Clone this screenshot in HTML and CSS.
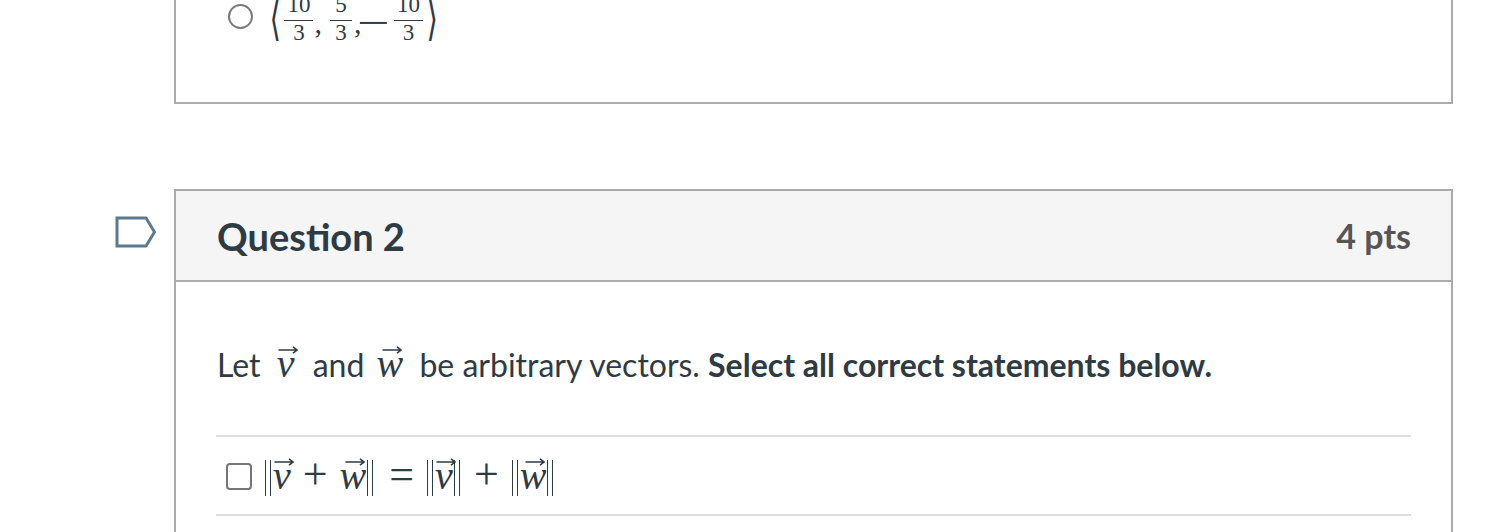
FILE: index.html
```html
<!DOCTYPE html>
<html lang="en">
<head>
<meta charset="utf-8">
<title>Quiz</title>
<link rel="stylesheet" href="styles.css">
</head>
<body>
<div class="page">
  <div class="row">
    <div class="gutter"></div>
    <div class="card card-prev">
      <div class="prev-body">
        <div class="choice">
          <span class="radio"></span>
          <span class="math">
            <span class="delim">⟨</span>
            <span class="frac"><span class="num">10</span><span class="den">3</span></span>
            <span class="comma">,</span>
            <span class="frac"><span class="num">5</span><span class="den">3</span></span>
            <span class="comma comma-tight">,</span>
            <span class="minus">−</span>
            <span class="frac"><span class="num">10</span><span class="den">3</span></span>
            <span class="delim">⟩</span>
          </span>
        </div>
      </div>
    </div>
  </div>

  <div class="row row-q">
    <div class="gutter gutter-flag">
      <svg class="flag" width="42" height="32" viewBox="0 0 42 32">
        <path d="M2 2 H31 L39.5 16 L31 30 H2 Z" fill="none" stroke="#5b7a91" stroke-width="3" stroke-linejoin="miter"/>
      </svg>
    </div>
    <div class="card">
      <div class="card-head">
        <h2 class="q-title">Question 2</h2>
        <span class="pts">4 pts</span>
      </div>
      <div class="card-body">
        <p class="q-text">Let <span class="vec vec-text vec-v"><svg class="arrow" viewBox="0 0 20 8"><path d="M0.5 4 H18.5 M15 0.8 L19 4 L15 7.2" fill="none" stroke="#2d3b45" stroke-width="1.5"/></svg>v</span> and <span class="vec vec-text vec-w"><svg class="arrow" viewBox="0 0 20 8"><path d="M0.5 4 H18.5 M15 0.8 L19 4 L15 7.2" fill="none" stroke="#2d3b45" stroke-width="1.5"/></svg>w</span> be arbitrary vectors. <strong>Select all correct statements below.</strong></p>
        <div class="answers">
          <div class="answer">
            <span class="checkbox"></span>
            <span class="eq"><span class="norm"></span><span class="vec vec-v"><svg class="arrow" viewBox="0 0 20 8"><path d="M0.5 4 H18.5 M15 0.8 L19 4 L15 7.2" fill="none" stroke="#2d3b45" stroke-width="1.5"/></svg>v</span><span class="op">+</span><span class="vec vec-w"><svg class="arrow" viewBox="0 0 20 8"><path d="M0.5 4 H18.5 M15 0.8 L19 4 L15 7.2" fill="none" stroke="#2d3b45" stroke-width="1.5"/></svg>w</span><span class="norm"></span><span class="op rel">=</span><span class="norm"></span><span class="vec vec-v"><svg class="arrow" viewBox="0 0 20 8"><path d="M0.5 4 H18.5 M15 0.8 L19 4 L15 7.2" fill="none" stroke="#2d3b45" stroke-width="1.5"/></svg>v</span><span class="norm"></span><span class="op">+</span><span class="norm"></span><span class="vec vec-w"><svg class="arrow" viewBox="0 0 20 8"><path d="M0.5 4 H18.5 M15 0.8 L19 4 L15 7.2" fill="none" stroke="#2d3b45" stroke-width="1.5"/></svg>w</span><span class="norm"></span></span>
          </div>
        </div>
      </div>
    </div>
  </div>
</div>
</body>
</html>
```

FILE: styles.css
```css
* { box-sizing: border-box; }

html, body {
  margin: 0;
  padding: 0;
  background: #ffffff;
}

body {
  font-family: Lato, "Open Sans", "Liberation Sans", sans-serif;
  color: #2d3b45;
  overflow: hidden;
}

.page {
  width: 1500px;
  padding-right: 47px;
}

.row {
  display: flex;
  align-items: flex-start;
}

.row-q {
  margin-top: 85px;
}

.gutter {
  width: 174px;
  flex: 0 0 174px;
}

.gutter-flag {
  padding-top: 27px;
  padding-left: 115px;
}

.flag { display: block; }

.card {
  flex: 1 1 auto;
  border: 2px solid #aaaaaa;
  background: #ffffff;
}

.card-prev {
  border-top: none;
}

/* previous question: only the last choice is visible */
.prev-body {
  height: 102px;
  padding-left: 52px;
  overflow: hidden;
}

.choice {
  display: flex;
  align-items: center;
  margin-top: -7px;
}

.radio {
  width: 25px;
  height: 25px;
  border: 2px solid #7a7a7a;
  border-radius: 50%;
  margin-top: -4px;
  flex: 0 0 auto;
}

.math {
  font-family: "Liberation Serif", "DejaVu Serif", serif;
  color: #2d3b45;
  display: inline-flex;
  align-items: center;
}

.choice .math {
  margin-left: 14px;
  font-size: 36px;
}

.delim {
  font-family: "DejaVu Serif", serif;
  font-size: 42px;
  font-weight: 200;
  line-height: 46px;
  transform: scaleX(0.7) scaleY(1.12);
  color: #2d3b45;
}

.frac {
  display: inline-flex;
  flex-direction: column;
  align-items: center;
  font-size: 23px;
  line-height: 1;
  padding: 0 1px;
}

.num {
  padding: 0 3px 4px;
  border-bottom: 1.5px solid #2d3b45;
  min-width: 22px;
  text-align: center;
}

.den {
  padding-top: 0;
}

.comma {
  font-size: 30px;
  align-self: flex-end;
  line-height: 1;
  margin-bottom: 6px;
  margin-right: 7px;
}

.comma-tight {
  margin-left: 1px;
  margin-right: 0;
}

.minus {
  display: inline-block;
  font-size: 40px;
  line-height: 1;
  transform: scaleX(1.45);
  margin: 9px 8px 0 1px;
}

.card-head {
  background: #f5f5f5;
  border-bottom: 2px solid #aaaaaa;
  height: 91px;
  display: flex;
  align-items: center;
  justify-content: space-between;
  padding: 0 40px 0 41px;
}

.q-title {
  margin: 0;
  font-size: 38px;
  font-weight: 700;
  color: #2d3b45;
}

.pts {
  font-size: 34px;
  font-weight: 700;
  color: #565656;
}

.card-body {
  padding: 61px 40px 0 40px;
  height: 250px;
}

.q-text {
  margin: 0 0 0 1px;
  font-size: 32px;
  line-height: 44px;
  height: 92px;
}

.q-text strong {
  font-weight: 700;
}

/* vector symbols: italic letter with an arrow accent laid over it */
.vec {
  position: relative;
  display: inline-block;
  font-family: "Liberation Serif", "DejaVu Serif", serif;
  font-style: italic;
  font-size: 40px;
  line-height: 1;
}

.vec-text.vec-v {
  margin: 0 10px 0 8px;
}

.vec-text.vec-w {
  margin: 0 8px 0 4px;
}

.arrow {
  position: absolute;
  top: 2px;
  width: 20px;
  height: 8px;
  display: block;
}

.vec-v .arrow { left: 1px; }
.vec-w .arrow { left: 5px; }

.answers {
  border-top: 2px solid #dddddd;
}

.answer {
  height: 79px;
  border-bottom: 2px solid #dddddd;
  display: flex;
  align-items: center;
  padding-left: 10px;
}

.checkbox {
  width: 26px;
  height: 27px;
  border: 2px solid #767676;
  border-radius: 4px;
  flex: 0 0 auto;
  margin-top: 1px;
}

.eq {
  display: block;
  margin-left: 12px;
  font-family: "Liberation Serif", "DejaVu Serif", serif;
  font-size: 40px;
  line-height: 50px;
  white-space: nowrap;
}

.norm {
  display: inline-block;
  vertical-align: -7px;
  width: 6px;
  height: 36px;
  border-left: 1.5px solid #2d3b45;
  border-right: 1.5px solid #2d3b45;
  margin: 0 2px 0 1px;
}

.op {
  font-size: 44px;
  margin: 0 12px;
}

.rel {
  margin: 0 12px 0 14px;
}
```
